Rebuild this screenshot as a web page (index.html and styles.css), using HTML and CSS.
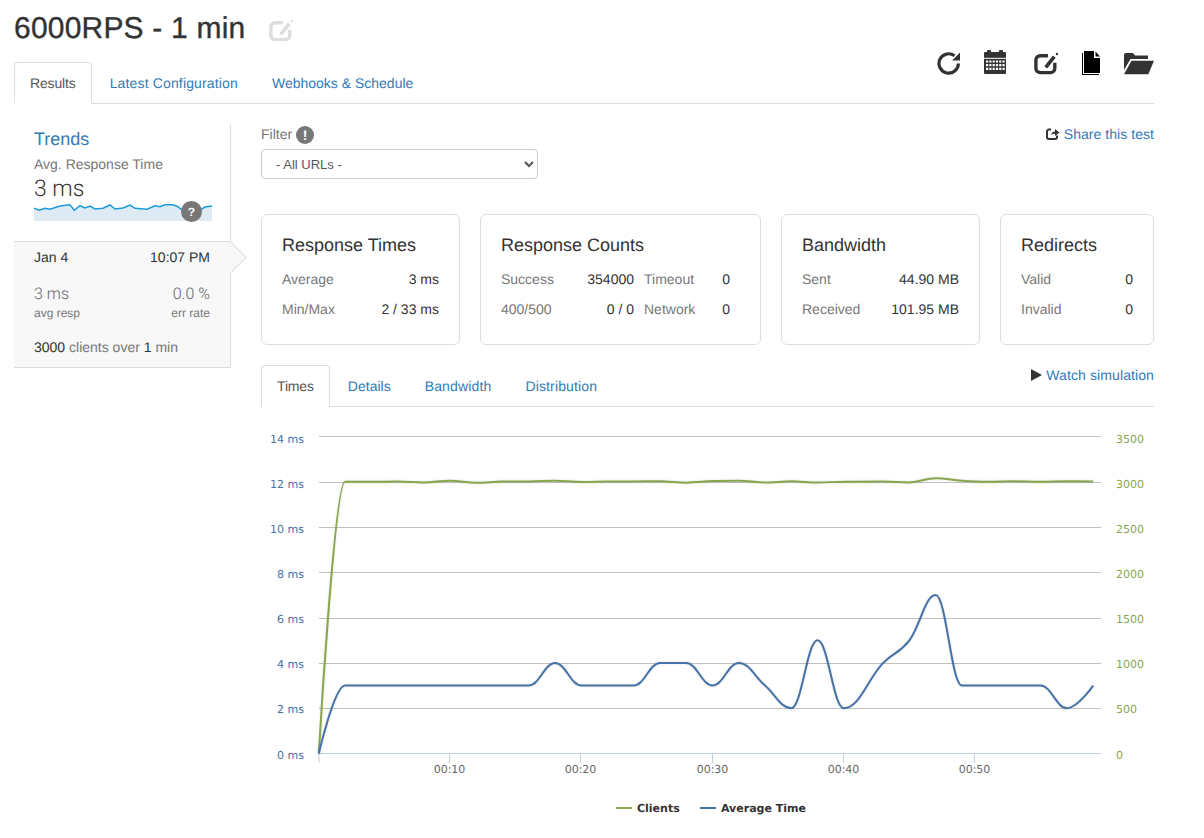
FILE: index.html
```html
<!DOCTYPE html>
<html lang="en">
<head>
<meta charset="utf-8">
<title>6000RPS - 1 min</title>
<link rel="stylesheet" href="styles.css">
</head>
<body>
<div class="page">
  <header class="title-row">
    <h1 class="title">6000RPS - 1 min</h1>
    <svg class="title-edit" width="24" height="24" viewBox="0 0 24 24"><path class="ico-stroke" d="M14 5.700H6.200a4.300 4.300 0 0 0-4.300 4.300v8.300a4.300 4.300 0 0 0 4.300 4.300h10.300a4.300 4.300 0 0 0 4.300-4.300v-5.600"/><path class="ico-pencil" d="M11.700 17.300 20.300 6.700"/><circle class="ico-fill" cx="23" cy="4" r="1.200"/></svg>
  </header>

  <div class="tabbar">
    <nav class="tabs">
      <a class="tab active">Results</a>
      <a class="tab loose">Latest Configuration</a>
      <a class="tab">Webhooks &amp; Schedule</a>
    </nav>
    <div class="toolbar">
      <svg width="23" height="23" viewBox="0 0 23 23" class="tool tool-refresh"><path class="refresh-arc" d="M21.400 11.500A9.700 9.700 0 1 1 17.500 3.700"/><path d="M15 8.500H23V.5Z"/></svg>
      <svg width="26" height="25" viewBox="0 0 26 25" class="tool"><rect x="3" y="0" width="4" height="4" rx="1"/><rect x="15" y="0" width="4" height="4" rx="1"/><rect x="0" y="2" width="22" height="22" rx="1"/><path class="cal-gap" d="M0 8.300H22"/><path class="cal-row" d="M2 11.500H21M2 15.200H21M2 18.900H21"/></svg>
      <svg width="24" height="25" viewBox="0 0 24 25" class="tool"><path class="ico-stroke" d="M14 5.700H6.200a4.300 4.300 0 0 0-4.300 4.300v8.300a4.300 4.300 0 0 0 4.300 4.300h10.300a4.300 4.300 0 0 0 4.300-4.300v-5.600"/><path class="ico-pencil" d="M11.700 17.300 20.300 6.700"/><circle cx="23" cy="4" r="1.200"/></svg>
      <svg width="18" height="25" viewBox="0 0 18 25" class="tool tool-black"><path d="M2 1H12V8H18V23H2Z"/><path d="M13.500 1.500 18 6.500H13.500Z"/><path d="M0 3H1V24H17V25H0Z"/></svg>
      <svg width="30" height="25" viewBox="0 -3 30 25" class="tool"><path d="M0 2a2 2 0 0 1 2-2H9l2 2.500H24V6H6.500L0 17Z"/><path d="M7.500 7.700H30L24.300 21.300H0Z"/></svg>
    </div>
  </div>

  <div class="main">
    <aside class="sidebar">
      <div class="trends">
        <a class="trends-link">Trends</a>
        <div class="trends-label">Avg. Response Time</div>
        <div class="trends-value">3 ms</div>
        <div class="spark">
          <svg width="178" height="21" viewBox="34 200 178 21"><path class="spark-fill" d="M34 208.300 39.300 210.300 45 208.300 50 209.300 60 206 70 204.700 74.300 210.300 80 205.700 85 208 90 206 95 209 103 208.300 110 205 115 209 123 208 130 205 135 208.300 147 209.300 155 205.700 160 206.700 165 204.700 173 204.700 178 206.700 182 210 192 213 200 210 205 207 212 206V221H34Z"/><path class="spark-line" d="M34 208.300 39.300 210.300 45 208.300 50 209.300 60 206 70 204.700 74.300 210.300 80 205.700 85 208 90 206 95 209 103 208.300 110 205 115 209 123 208 130 205 135 208.300 147 209.300 155 205.700 160 206.700 165 204.700 173 204.700 178 206.700 182 210 192 213 200 210 205 207 212 206"/></svg>
          <span class="badge badge-q">?</span>
        </div>
      </div>
      <div class="run">
        <div class="run-row run-date"><span>Jan 4</span><span>10:07 PM</span></div>
        <div class="run-row run-num"><span>3 ms</span><span>0.0 %</span></div>
        <div class="run-row run-small"><span>avg resp</span><span>err rate</span></div>
        <div class="run-foot"><b>3000</b> clients over <b>1</b> min</div>
      </div>
    </aside>

    <section class="content">
      <div class="filter-row">
        <div>
          <div class="filter-label">Filter <span class="badge badge-ex">!</span></div>
          <select class="filter-select"><option>- All URLs -</option></select>
        </div>
        <a class="link share"><svg width="14" height="14" viewBox="0 0 14 14"><path class="share-box" d="M5 2.500H3a2 2 0 0 0-2 2V10a2 2 0 0 0 2 2h6a2 2 0 0 0 2-2V8.500"/><path d="M5.500 8.300C5.500 5.500 7 4.500 9 4.500V2l4.500 3.500L9 9V6.800C7.500 6.800 6.300 7 5.500 8.300Z"/></svg> Share this test</a>
      </div>

      <div class="cards">
        <div class="card">
          <h3>Response Times</h3>
          <div class="grid-two">
            <span class="k">Average</span><span class="v">3 ms</span>
            <span class="k">Min/Max</span><span class="v">2 / 33 ms</span>
          </div>
        </div>
        <div class="card">
          <h3>Response Counts</h3>
          <div class="grid-four">
            <span class="k">Success</span><span class="v">354000</span><span class="k k2">Timeout</span><span class="v">0</span>
            <span class="k">400/500</span><span class="v">0 / 0</span><span class="k k2">Network</span><span class="v">0</span>
          </div>
        </div>
        <div class="card">
          <h3>Bandwidth</h3>
          <div class="grid-two">
            <span class="k">Sent</span><span class="v">44.90 MB</span>
            <span class="k">Received</span><span class="v">101.95 MB</span>
          </div>
        </div>
        <div class="card">
          <h3>Redirects</h3>
          <div class="grid-two">
            <span class="k">Valid</span><span class="v">0</span>
            <span class="k">Invalid</span><span class="v">0</span>
          </div>
        </div>
      </div>

      <div class="tabbar tabbar-inner">
        <nav class="tabs">
          <a class="tab active">Times</a>
          <a class="tab">Details</a>
          <a class="tab loose">Bandwidth</a>
          <a class="tab loose">Distribution</a>
        </nav>
        <a class="link watch"><svg width="11" height="12" viewBox="0 0 11 12"><path d="M0 0 11 6 0 12Z"/></svg> Watch simulation</a>
      </div>

      <svg class="chart" width="893" height="425" viewBox="261 407 893 425">
        <g class="grid">
          <path d="M319 436.500H1101M319 482.500H1101M319 527.500H1101M319 572.500H1101M319 618.500H1101M319 663.500H1101M319 708.500H1101"/>
        </g>
        <path class="axis" d="M319 753.500H1101M319 754V763M449.500 754V763M580.500 754V763M712.500 754V763M843.500 754V763M974.500 754V763"/>
        <g class="lbl-left">
          <text x="304" y="443">14 ms</text><text x="304" y="488">12 ms</text><text x="304" y="533">10 ms</text><text x="304" y="578">8 ms</text><text x="304" y="623">6 ms</text><text x="304" y="668">4 ms</text><text x="304" y="713">2 ms</text><text x="304" y="759">0 ms</text>
        </g>
        <g class="lbl-right">
          <text x="1116" y="443">3500</text><text x="1116" y="488">3000</text><text x="1116" y="533">2500</text><text x="1116" y="578">2000</text><text x="1116" y="623">1500</text><text x="1116" y="668">1000</text><text x="1116" y="713">500</text><text x="1116" y="759">0</text>
        </g>
        <g class="lbl-x">
          <text x="449.500" y="773">00:10</text><text x="580.500" y="773">00:20</text><text x="712.500" y="773">00:30</text><text x="843.500" y="773">00:40</text><text x="974.500" y="773">00:50</text>
        </g>
        <path id="line-clients" class="series series-clients"/>
        <path id="line-time" class="series series-time"/>
        <path class="legend-clients" d="M616 808H632"/>
        <text class="legend" x="637" y="812">Clients</text>
        <path class="legend-time" d="M700 808H716"/>
        <text class="legend" x="721" y="812">Average Time</text>
      </svg>
    </section>
  </div>
</div>
<script src="script.js"></script>
</body>
</html>
```
FILE: styles.css
```css
* { box-sizing: border-box; }
html, body { margin: 0; padding: 0; background: #fff; overflow: hidden; }
body { font-family: "Liberation Sans", Arial, sans-serif; font-size: 14px; line-height: 20px; color: #333; text-rendering: geometricPrecision; }
.page { width: 1140px; margin-left: 14px; padding-top: 14px; }

.title-row { display: flex; align-items: center; height: 30px; }
.title { margin: 0; font-size: 30px; line-height: 30px; font-weight: 400; letter-spacing: .2px; -webkit-text-stroke: .35px #333; }
.title-edit { margin-left: 24px; }
.title-edit .ico-stroke { stroke: #ddd; }
.title-edit .ico-pencil { stroke: #ddd; }
.title-edit .ico-fill { fill: #ddd; }

.tabbar { display: flex; justify-content: space-between; align-items: flex-end; border-bottom: 1px solid #ddd; height: 56px; margin-top: 4px; padding-top: 2px; }
.tabs { display: flex; margin-bottom: -1px; }
.tab { display: block; padding: 10px 15px; margin-right: 2px; border: 1px solid transparent; border-radius: 4px 4px 0 0; color: #337ab7; }
.tab.active { color: #555; background: #fff; border-color: #ddd #ddd #fff; letter-spacing: -.15px; }
.loose { letter-spacing: .15px; }

.toolbar { display: flex; gap: 24px; align-self: flex-start; align-items: flex-start; fill: #333; }
.tool { display: block; }
.tool-refresh { margin-top: 2px; }
.tool-black { fill: #000; }
.refresh-arc { fill: none; stroke: #333; stroke-width: 3.2; }
.ico-stroke { fill: none; stroke: #333; stroke-width: 3.4; }
.ico-pencil { fill: none; stroke: #333; stroke-width: 3.6; }
.cal-gap { stroke: #fff; stroke-width: 1; }
.cal-row { stroke: #fff; stroke-width: 2.2; stroke-dasharray: 2.2 1.1; }

.main { display: flex; margin-top: 20px; }
.sidebar { width: 217px; flex: none; margin-right: 30px; }
.trends { height: 117px; padding: 5px 0 0 20px; border-right: 1px solid #ddd; }
.trends-link { display: block; font-size: 18px; color: #337ab7; }
.trends-label { margin-top: 5px; color: #777; }
.trends-value { margin-top: 2px; font-family: Roboto, "Liberation Sans", sans-serif; font-weight: 300; font-size: 23px; line-height: 26px; color: #333; }
.spark { position: relative; width: 178px; height: 21px; margin-top: -2px; }
.spark svg { display: block; }
.spark-fill { fill: #deeaf4; }
.spark-line { fill: none; stroke: #1b9bd7; stroke-width: 1.5; }

.badge { display: inline-flex; align-items: center; justify-content: center; border-radius: 50%; background: #777; color: #fff; font-weight: 700; }
.badge-q { position: absolute; left: 147px; top: 1px; width: 21px; height: 21px; font-size: 12px; }
.badge-ex { width: 18px; height: 18px; font-size: 14px; vertical-align: -1px; }

.run { position: relative; height: 127px; padding: 5px 20px 0 20px; background: #f8f8f8; border: 1px solid #ddd; border-width: 1px 1px 1px 0; }
.run::after { content: ""; position: absolute; right: -12px; top: 4px; width: 22px; height: 22px; background: #f8f8f8; border: 1px solid #ddd; border-width: 1px 1px 0 0; transform: rotate(45deg); }
.run-row { display: flex; justify-content: space-between; }
.run-num { margin-top: 17px; font-family: Roboto, "Liberation Sans", sans-serif; font-weight: 300; font-size: 16px; color: #666; }
.run-small { margin-top: 1px; font-size: 12px; line-height: 16px; color: #777; }
.run-foot { margin-top: 16px; color: #777; }
.run-foot b { font-weight: 400; color: #333; }

.content { width: 893px; flex: none; }
.filter-row { display: flex; justify-content: space-between; align-items: flex-start; }
.filter-label { color: #777; }
.filter-select { display: block; width: 277px; height: 30px; margin-top: 5px; padding: 0 10px; background: #fff; border: 1px solid #ccc; border-radius: 4px; color: #555; font-family: "Liberation Sans", Arial, sans-serif; font-size: 13px; }
.link { color: #337ab7; }
.share { letter-spacing: .05px; }
.share svg { fill: #333; vertical-align: -2px; margin-left: -1px; }
.share-box { fill: none; stroke: #333; stroke-width: 2; }

.cards { display: grid; grid-template-columns: 199px 281px 199px 154px; gap: 20px; margin-top: 35px; }
.card { height: 131px; padding: 20px; border: 1px solid #ddd; border-radius: 6px; }
.card h3 { margin: 0 0 9px; font-size: 18px; line-height: 20px; font-weight: 400; }
.grid-two { display: grid; grid-template-columns: auto 1fr; grid-auto-rows: 30px; align-items: center; }
.grid-four { display: grid; grid-template-columns: 60px 73px 60px 36px; grid-auto-rows: 30px; align-items: center; white-space: nowrap; }
.k { color: #777; }
.k2 { margin-left: 10px; }
.v { text-align: right; color: #333; }

.tabbar-inner { height: 42px; margin-top: 20px; padding-top: 0; }
.tabbar-inner .tabs { align-self: flex-end; }
.watch { align-self: flex-start; letter-spacing: .1px; }
.watch svg { fill: #333; vertical-align: -1px; }

.chart { display: block; }
.grid path { fill: none; stroke: #c0c0c0; stroke-width: 1; }
.axis { fill: none; stroke: #c0d0e0; stroke-width: 1; }
.chart text { font-family: "DejaVu Sans", Verdana, sans-serif; font-size: 11px; }
.lbl-left text { text-anchor: end; fill: #4572a7; }
.lbl-right text { fill: #89a54e; }
.lbl-x text { text-anchor: middle; fill: #666; }
.series { fill: none; stroke-width: 2; stroke-linejoin: round; filter: drop-shadow(0 0 1px rgba(0, 0, 0, .12)); }
.series-clients { stroke: #89a54e; }
.series-time { stroke: #4572a7; }
.legend-clients { stroke: #89a54e; stroke-width: 2; }
.legend-time { stroke: #4572a7; stroke-width: 2; }
.chart .legend { font-size: 11px; font-weight: 700; fill: #333; }
```
FILE: script.js
```js
// Draws the two chart series as Highcharts-style splines.
var times = [0,2,4,6,8,10,12,14,16,18,20,22,24,26,28,30,32,34,36,38,40,43,45,47,49,51,53,55,57,59];
var avg = [0,3,3,3,3,3,3,3,3,4,3,3,3,4,4,3,4,3,2,5,2,4,5,7,3,3,3,3,2,3];
var clients = [0,3000,3000,3002,2992,3012,2988,3003,3004,3012,2998,3003,3004,3005,2990,3008,3012,2992,3005,2992,3000,3003,2993,3040,3012,3000,3005,3000,3005,3003];

function spline(pts) {
  var d = "M" + pts[0][0] + " " + pts[0][1];
  var s = 1.5, den = 2.5;
  var rcx = pts[0][0], rcy = pts[0][1];
  for (var i = 1; i < pts.length; i++) {
    var x = pts[i][0], y = pts[i][1];
    var lx = pts[i - 1][0], ly = pts[i - 1][1];
    var lcx = x, lcy = y, ncx = x, ncy = y;
    if (i < pts.length - 1) {
      var nx = pts[i + 1][0], ny = pts[i + 1][1];
      lcx = (s * x + lx) / den; lcy = (s * y + ly) / den;
      ncx = (s * x + nx) / den; ncy = (s * y + ny) / den;
      var c = ((ncy - lcy) * (ncx - x)) / (ncx - lcx) + y - ncy;
      lcy += c; ncy += c;
      if (lcy > ly && lcy > y) { lcy = Math.max(ly, y); ncy = 2 * y - lcy; }
      else if (lcy < ly && lcy < y) { lcy = Math.min(ly, y); ncy = 2 * y - lcy; }
      if (ncy > ny && ncy > y) { ncy = Math.max(ny, y); lcy = 2 * y - ncy; }
      else if (ncy < ny && ncy < y) { ncy = Math.min(ny, y); lcy = 2 * y - ncy; }
    }
    d += "C" + [rcx, rcy, lcx, lcy, x, y].map(function (n) { return n.toFixed(2); }).join(" ");
    rcx = ncx; rcy = ncy;
  }
  return d;
}

function xAt(t) { return 318.8 + t * 13.125; }
function series(values, perPx) {
  return values.map(function (v, i) { return [xAt(times[i]), 753.5 - v / perPx * 45.29]; });
}
document.getElementById("line-time").setAttribute("d", spline(series(avg, 2)));
document.getElementById("line-clients").setAttribute("d", spline(series(clients, 500)));
```
